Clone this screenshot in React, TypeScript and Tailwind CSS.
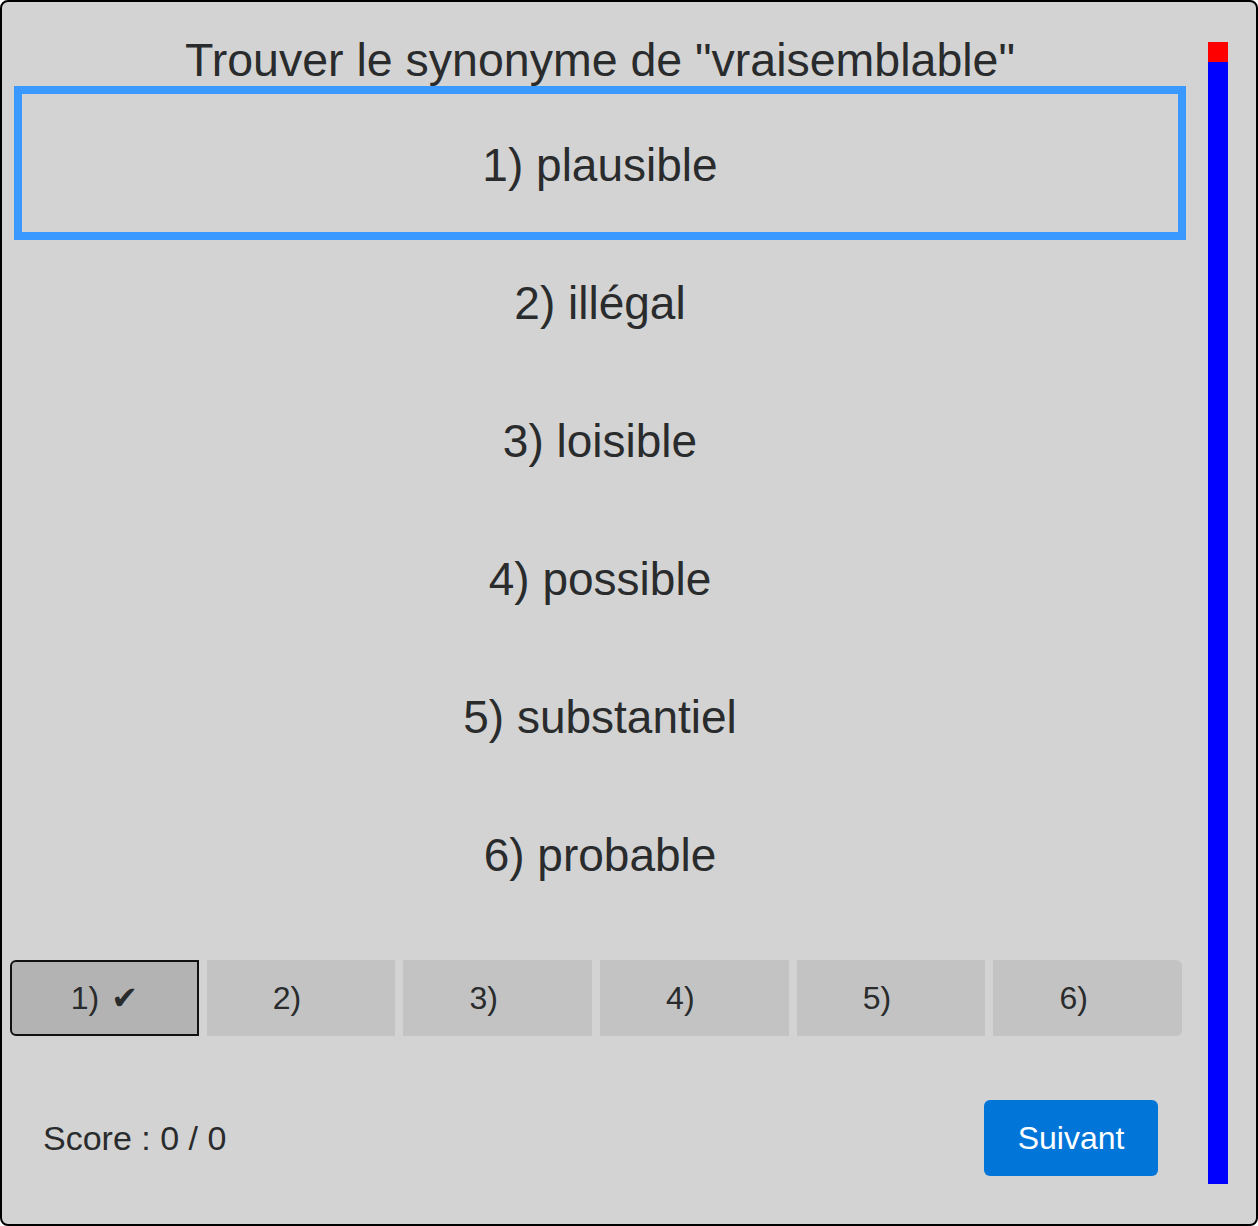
import React from "react";

const options = ["plausible", "illégal", "loisible", "possible", "substantiel", "probable"];

export default function App() {
  return (
    <div
      className="w-[1258px] h-[1226px] border-2 border-black rounded-lg bg-[#d3d3d3] flex text-[#292b2c]"
      style={{ fontFamily: '"Liberation Sans", Arial, sans-serif' }}
    >
      <div className="w-[1196px] flex flex-col">
        <div className="pt-[32px] pb-[8px] text-center text-[46.5px] leading-[52px]">
          Trouver le synonyme de "vraisemblable"
        </div>
        <div className="mx-[20px] flex flex-col">
          {options.map((o, i) => (
            <div
              key={i}
              className={
                "h-[138px] flex items-center justify-center pt-[4px] text-[46px] leading-[52px] " +
                (i === 0 ? "[outline:8px_solid_#3a99ff]" : "")
              }
            >
              {i + 1}) {o}
            </div>
          ))}
        </div>
        <div className="mt-[38px] ml-[8px] mr-[16px] h-[76px] grid grid-cols-6 gap-2">
          {options.map((_, i) => (
            <div
              key={i}
              className={
                "flex items-center justify-center text-[32px] " +
                (i === 0
                  ? "bg-[#b3b3b3] border-2 border-[#111] rounded-l-md"
                  : "bg-[#c3c3c3] pr-[28px]") +
                (i === 5 ? " rounded-r-md" : "")
              }
            >
              {i + 1}){i === 0 ? (
                <span
                  className="ml-[12px] text-[32px]"
                  style={{ fontFamily: '"DejaVu Sans", sans-serif' }}
                >
                  ✔
                </span>
              ) : null}
            </div>
          ))}
        </div>
        <div className="mt-[64px] h-[76px] flex items-center justify-between pl-[41px] pr-[40px]">
          <div className="text-[34px]">Score : 0 / 0</div>
          <div className="w-[174px] h-[76px] rounded-md bg-[#0275d8] text-white text-[32px] flex items-center justify-center">
            Suivant
          </div>
        </div>
      </div>
      <div className="ml-[10px] w-[20px] mt-[40px] mb-[40px] flex flex-col">
        <div className="h-[20px] bg-[#ff0000]" />
        <div className="flex-1 bg-[#0000ff]" />
      </div>
    </div>
  );
}
